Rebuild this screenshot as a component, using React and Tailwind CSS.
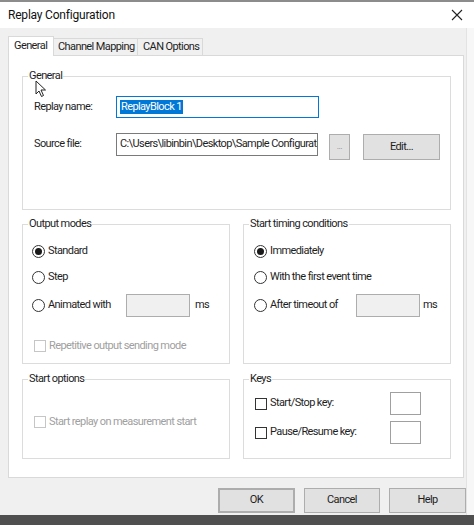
import React from 'react';

const FONT = { fontFamily: 'Roboto, "Liberation Sans", sans-serif' };

function Group({ title, className, children }) {
    return (
        <div className={`border border-[#dcdcdc] ${className}`}>
            <div className="-mt-[9px] ml-[5px] w-fit bg-white px-[1px] leading-[16px] text-[#1e1e1e]">{title}</div>
            {children}
        </div>
    );
}

function Radio({ checked }) {
    return (
        <span className="w-[13px] h-[13px] rounded-full border border-[#333] bg-white flex items-center justify-center shrink-0">
            {checked && <span className="w-[7px] h-[7px] rounded-full bg-[#1a1a1a]" />}
        </span>
    );
}

function Check({ disabled }) {
    return (
        <span
            className={`w-[12px] h-[12px] border shrink-0 bg-white ${
                disabled ? 'border-[#c6c6c6]' : 'border-[#333]'
            }`}
        />
    );
}

function Button({ children, className }) {
    return (
        <div
            className={`h-[25px] bg-[#e1e1e1] border border-[#adadad] flex items-center justify-center text-[#1e1e1e] ${className}`}
        >
            {children}
        </div>
    );
}

function Arrow() {
    return (
        <svg className="absolute left-[35px] top-[80px]" width="12" height="18" viewBox="0 0 12 18">
            <path d="M1 1 L1 14 L4 11 L6.5 16.5 L8.5 15.5 L6 10 L10.5 10 Z" fill="white" stroke="#222" strokeWidth="1" strokeLinejoin="round" />
        </svg>
    );
}

export default function App() {
    return (
        <div className="relative w-[474px] h-[525px] bg-[#f0f0f0] flex flex-col overflow-hidden text-[11px] tracking-[-0.6px] text-[#1e1e1e] whitespace-nowrap" style={FONT}>
            <div className="h-[2px] bg-[#8c8c8c]" />
            <div className="h-[26px] bg-white flex items-center justify-between pl-[8px] pr-[11px]">
                <span className="text-[12px] tracking-[-0.2px] text-[#111]">Replay Configuration</span>
                <svg width="12" height="12" viewBox="0 0 12 12">
                    <path d="M1 1 L11 11 M11 1 L1 11" stroke="#222" strokeWidth="1.1" />
                </svg>
            </div>

            <div className="flex-1 flex">
                <div className="w-[466px] flex flex-col pl-[8px] pt-[8px]">
                    {/* tabs */}
                    <div className="flex items-end h-[19px]">
                        <div className="relative z-10 -mb-px h-[20px] w-[46px] bg-white border border-b-0 border-[#d9d9d9] pl-[5px] flex items-center">
                            General
                        </div>
                        <div className="h-[17px] w-[84px] border border-l-0 border-b-0 border-[#d9d9d9] pl-[4px] flex items-center">
                            Channel Mapping
                        </div>
                        <div className="h-[17px] w-[65px] border border-l-0 border-b-0 border-[#d9d9d9] pl-[5px] flex items-center">
                            CAN Options
                        </div>
                    </div>

                    {/* panel */}
                    <div className="w-[456px] h-[423px] bg-white border border-[#d9d9d9] pl-[13px] pt-[20px]">
                        <Group title="General" className="w-[429px] h-[134px]">
                            <div className="flex items-center mt-[12px] pl-[11px]">
                                <span className="w-[82px]">Replay name:</span>
                                <div className="w-[203px] h-[22px] border border-[#0078d7] flex items-center pl-[3px]">
                                    <span className="bg-[#0078d7] text-white px-[1px] leading-[14px]">ReplayBlock 1</span>
                                </div>
                            </div>
                            <div className="flex items-start mt-[15px] pl-[11px]">
                                <span className="w-[82px] h-[23px] flex items-center">Source file:</span>
                                <div className="w-[202px] h-[23px] border border-[#7a7a7a] flex items-center pl-[3px] overflow-hidden">
                                    C:\Users\libinbin\Desktop\Sample Configurati
                                </div>
                                <Button className="ml-[11px] mt-[1px] w-[21px] h-[26px] text-[#888] text-[9px]">...</Button>
                                <Button className="ml-[13px] mt-[1px] w-[77px] h-[26px]">Edit...</Button>
                            </div>
                        </Group>

                        <div className="flex gap-[13px] mt-[14px]">
                            <Group title="Output modes" className="w-[208px] h-[140px]">
                                <div className="pl-[9px] mt-[6px]">
                                    <div className="h-[26px] flex items-center gap-[3px]">
                                        <Radio checked />
                                        <span>Standard</span>
                                    </div>
                                    <div className="h-[26px] flex items-center gap-[3px]">
                                        <Radio />
                                        <span>Step</span>
                                    </div>
                                    <div className="h-[30px] flex items-center">
                                        <div className="w-[94px] flex items-center gap-[3px]">
                                            <Radio />
                                            <span>Animated with</span>
                                        </div>
                                        <div className="w-[64px] h-[23px] bg-[#f0f0f0] border border-[#adadad]" />
                                        <span className="ml-[5px]">ms</span>
                                    </div>
                                    <div className="h-[26px] mt-[13px] flex items-center gap-[3px] pl-[2px] text-[#a0a0a0]">
                                        <Check disabled />
                                        <span>Repetitive output sending mode</span>
                                    </div>
                                </div>
                            </Group>
                            <Group title="Start timing conditions" className="w-[208px] h-[140px]">
                                <div className="pl-[10px] mt-[6px]">
                                    <div className="h-[26px] flex items-center gap-[3px]">
                                        <Radio checked />
                                        <span>Immediately</span>
                                    </div>
                                    <div className="h-[26px] flex items-center gap-[3px]">
                                        <Radio />
                                        <span>With the first event time</span>
                                    </div>
                                    <div className="h-[30px] flex items-center">
                                        <div className="w-[102px] flex items-center gap-[3px]">
                                            <Radio />
                                            <span>After timeout of</span>
                                        </div>
                                        <div className="w-[64px] h-[23px] bg-[#f0f0f0] border border-[#adadad]" />
                                        <span className="ml-[3px]">ms</span>
                                    </div>
                                </div>
                            </Group>
                        </div>

                        <div className="flex gap-[13px] mt-[15px]">
                            <Group title="Start options" className="w-[208px] h-[80px]">
                                <div className="h-[26px] mt-[22px] pl-[11px] flex items-center gap-[3px] text-[#a0a0a0]">
                                    <Check disabled />
                                    <span>Start replay on measurement start</span>
                                </div>
                            </Group>
                            <Group title="Keys" className="w-[208px] h-[80px]">
                                <div className="pl-[11px] mt-[5px]">
                                    <div className="flex items-center">
                                        <div className="w-[135px] flex items-center gap-[3px]">
                                            <Check />
                                            <span>Start/Stop key:</span>
                                        </div>
                                        <div className="w-[31px] h-[23px] border border-[#a0a0a0] bg-white" />
                                    </div>
                                    <div className="flex items-center mt-[6px]">
                                        <div className="w-[135px] flex items-center gap-[3px]">
                                            <Check />
                                            <span>Pause/Resume key:</span>
                                        </div>
                                        <div className="w-[31px] h-[23px] border border-[#a0a0a0] bg-white" />
                                    </div>
                                </div>
                            </Group>
                        </div>
                    </div>

                    {/* buttons */}
                    <div className="flex gap-[9px] mt-[10px] pl-[210px]">
                        <Button className="w-[77px] border-[#0078d7] border-2">OK</Button>
                        <Button className="w-[76px]">Cancel</Button>
                        <Button className="w-[77px]">Help</Button>
                    </div>
                </div>
                <div className="w-[8px] bg-[#f7f7f7] border-l border-[#e3e3e3]" />
            </div>
            <div className="h-[10px] bg-[#4f4f4f]" />
            <Arrow />
        </div>
    );
}
